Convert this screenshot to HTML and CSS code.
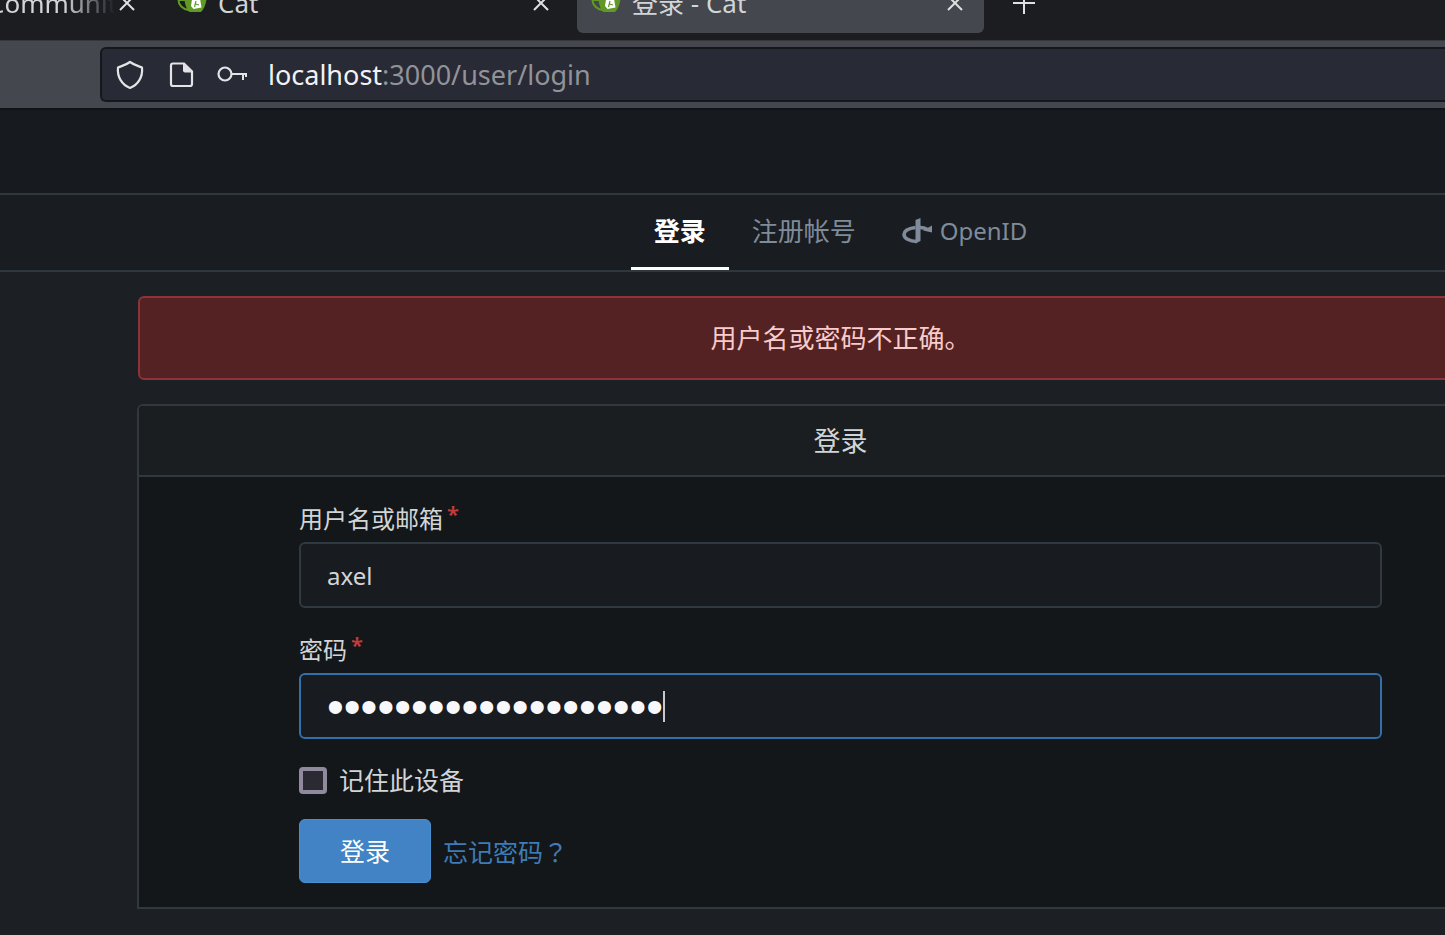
FILE: index.html
```html
<!DOCTYPE html>
<html lang="zh-CN">
<head>
<meta charset="utf-8">
<title>登录 - Cat</title>
<link rel="stylesheet" href="styles.css">
</head>
<body>
<svg class="defs" aria-hidden="true">
  <symbol id="close" viewBox="0 0 16 16"><path d="M1 1l14 14M15 1L1 15" fill="none" stroke="currentColor" stroke-width="2"/></symbol>
  <symbol id="gitea" viewBox="0 0 32 32">
    <path d="M9 13H1.500c0 5 4 9 10 10" fill="none" stroke="#609926" stroke-width="2"/>
    <path d="M7 6h23c0 8-2 14-5 18-1 1-1.500 1-2.500 1h-9c-1.500 0-2-.5-3-2-2-4-3.500-9-3.500-17z" fill="#609926"/>
    <path d="M15 12.500l8-1 1.500 9-8 1.500-2.500-3z" fill="#fff"/>
    <path d="M19 14l-1.500 6m1-3l3.500 1" stroke="#609926" stroke-width="1.200" fill="none"/>
  </symbol>
</svg>
<header class="browser">
  <div class="tabstrip">
    <div class="tab tab-cut"><span class="tab-title tab-fade">Communit</span><button class="tab-close" aria-label="关闭"><svg><use href="#close"/></svg></button></div>
    <div class="tab"><svg class="favicon"><use href="#gitea"/></svg><span class="tab-title">Cat</span><button class="tab-close" aria-label="关闭"><svg><use href="#close"/></svg></button></div>
    <div class="tab tab-active"><svg class="favicon"><use href="#gitea"/></svg><span class="tab-title">登录 - Cat</span><button class="tab-close" aria-label="关闭"><svg><use href="#close"/></svg></button></div>
    <button class="tab-new" aria-label="新标签页"><svg viewBox="0 0 22 22"><path d="M11 0v22M0 11h22" stroke="currentColor" stroke-width="2"/></svg></button>
  </div>
  <div class="toolbar">
    <div class="urlbar">
      <svg class="url-icon" viewBox="0 0 30 30"><path d="M15 2c4 3 8 4 12 5.500C28 17 23 25 15 28 7 25 2 17 3 7.500 7 6 11 5 15 2z" fill="none" stroke="currentColor" stroke-width="2.200" stroke-linejoin="round"/></svg>
      <svg class="url-icon" viewBox="0 0 30 30"><path d="M7 3.500H18l8 8v12.500a2 2 0 0 1-2 2H7a2 2 0 0 1-2-2V5.500a2 2 0 0 1 2-2z" fill="none" stroke="currentColor" stroke-width="2.200"/><path d="M17 3.500l9 9h-7a2 2 0 0 1-2-2z" fill="currentColor"/></svg>
      <svg class="url-icon" viewBox="0 0 30 30"><path d="M14 14h16M26 14v6M29 14v3" fill="none" stroke="currentColor" stroke-width="2"/><circle cx="8" cy="14" r="6.500" fill="none" stroke="currentColor" stroke-width="2.200"/></svg>
      <span class="url"><span class="url-host">localhost</span>:3000/user/login</span>
    </div>
  </div>
</header>
<div class="page">
  <div class="navbar"></div>
  <nav class="auth-tabs">
    <a class="auth-tab auth-tab-active" href="#">登录</a>
    <a class="auth-tab" href="#">注册帐号</a>
    <a class="auth-tab" href="#"><svg class="openid" viewBox="0 0 30 26"><path d="M13.500 2l5-2v23l-5 2.500z" fill="currentColor"/><path d="M13.500 9.500C6 10.500 2 13 2 16.500S7 23.500 15 23.500M18 9.500c3 0 5 .5 7.500 2" fill="none" stroke="currentColor" stroke-width="3.600"/><path d="M30 7.500V14.500l-9-2z" fill="currentColor"/></svg><span class="openid-name">OpenID</span></a>
  </nav>
  <main class="content">
    <p class="error" role="alert">用户名或密码不正确。</p>
    <section class="card">
      <h1 class="card-title">登录</h1>
      <form class="form">
        <div class="field">
          <label class="label" for="user">用户名或邮箱<span class="star">*</span></label>
          <input class="input" id="user" type="text" value="axel">
        </div>
        <div class="field">
          <label class="label" for="password">密码<span class="star">*</span></label>
          <div class="password-wrap">
            <input class="input input-focus" id="password" type="password" value="aaaaaaaaaaaaaaaaaaaa">
            <span class="caret"></span>
          </div>
        </div>
        <div class="remember">
          <input class="check" id="remember" type="checkbox"><label for="remember">记住此设备</label>
        </div>
        <div class="actions">
          <button class="submit" type="submit">登录</button>
          <a class="forgot" href="#">忘记密码<span class="mark" lang="zh-TW">？</span></a>
        </div>
      </form>
    </section>
  </main>
</div>
</body>
</html>
```
FILE: styles.css
```css
* { box-sizing: border-box; }

body {
  margin: 0;
  min-height: 100vh;
  overflow: hidden;
  background: #1c1f24;
  color: #d2d5d8;
  font: 26px/36px "Noto Sans", "Noto Sans CJK SC", sans-serif;
}

button, input { font: inherit; color: inherit; }
a { color: inherit; text-decoration: none; }
svg { display: block; }
.defs { position: absolute; width: 0; height: 0; }

/* Browser window */
.tabstrip {
  display: flex;
  align-items: flex-start;
  gap: 7px;
  height: 40px;
  overflow: hidden;
  background: #1b1d21;
}

.tab {
  flex: none;
  display: flex;
  align-items: center;
  gap: 9px;
  width: 407px;
  height: 60px;
  margin-top: -27px;
  padding: 0 21px 0 14px;
  border-radius: 6px;
}

.tab-cut { gap: 4px; width: 168px; margin-left: -12px; padding-left: 0; }
.tab-active { background: #44474d; }
.tab-title { flex: 1; overflow: hidden; white-space: nowrap; }
.tab-fade { mask-image: linear-gradient(to right, #000 60%, transparent); }
.favicon { width: 32px; height: 32px; }

.tab-close, .tab-new {
  flex: none;
  padding: 0;
  border: 0;
  background: none;
  color: #e0e0e2;
}

.tab-close svg { width: 16px; height: 16px; }
.tab-new { margin: -8px 0 0 22px; }
.tab-new svg { width: 22px; height: 22px; }

.toolbar {
  padding: 6px 0 6px 100px;
  border-top: 1px solid #35373c;
  border-bottom: 2px solid #101317;
  background: #44474d;
}

.urlbar {
  display: flex;
  align-items: center;
  gap: 21px;
  height: 55px;
  padding-left: 13px;
  border: 2px solid #15171c;
  border-right: 0;
  border-radius: 6px 0 0 6px;
  background: #282a36;
}

.url-icon { width: 30px; height: 30px; color: #e4e4e6; }
.url { color: #929399; font-size: 27px; white-space: nowrap; }
.url-host { color: #f2f2f4; }

/* Site, wider than the visible part of the window */
.page { width: calc(100% + 236px); }
.navbar { height: 85px; border-bottom: 2px solid #2f383d; background: #171a1e; }

.auth-tabs {
  display: flex;
  justify-content: center;
  height: 77px;
  border-bottom: 2px solid #2e363e;
  background: #191c20;
}

.auth-tab {
  display: flex;
  align-items: center;
  gap: 8px;
  padding: 0 23px;
  border-bottom: 3px solid transparent;
  color: #7f8b99;
}

.auth-tab-active { border-color: #fff; color: #fff; font-weight: 700; }
.openid { width: 30px; height: 26px; }
.openid-name { font-size: 24px; }

.content { padding: 24px 137px 0; }

.error {
  margin: 0 1px 24px;
  padding: 22px;
  border: 2px solid #8c3438;
  border-radius: 6px;
  background: #542222;
  color: #f9cbcb;
  text-align: center;
}

.card {
  overflow: hidden;
  border: 2px solid #30393f;
  border-radius: 6px 6px 0 0;
  background: #141719;
}

.card-title {
  margin: 0;
  padding: 17px 16px;
  border-bottom: 2px solid #30393f;
  background: #1b1e20;
  font-size: 27px;
  font-weight: 400;
  line-height: 35px;
  text-align: center;
}

.form { padding: 24px 160px; }
.field { margin-bottom: 24px; }
.label { display: flex; gap: 4px; margin-bottom: 5px; font-size: 24px; }
.star { color: #c53c3c; font-size: 22px; font-weight: 600; line-height: 24px; }

.input {
  display: block;
  width: 100%;
  height: 66px;
  padding: 0 26px;
  border: 2px solid #30393f;
  border-radius: 6px;
  outline: 0;
  background: #181b1f;
  font-size: 24px;
}

.input-focus {
  border-color: #3370a8;
  color: #f8f8fa;
  font-family: "Liberation Sans", sans-serif;
  font-size: 48px;
}

.password-wrap { position: relative; }

.caret {
  position: absolute;
  top: 18px;
  left: 364px;
  width: 2px;
  height: 31px;
  background: #c8c9cc;
}

.remember { display: flex; align-items: center; gap: 12px; margin-bottom: 22px; font-size: 25px; line-height: 34px; }

.check {
  appearance: none;
  width: 28px;
  height: 27px;
  margin: 0;
  border: 4px solid #8f8b9c;
  border-radius: 4px;
  background: #2b2a33;
}

.actions { display: flex; align-items: center; gap: 12px; font-size: 25px; line-height: 34px; }

.submit {
  height: 64px;
  padding: 0 40px;
  border: 1px solid #4a8fd0;
  border-radius: 6px;
  background: #4183c4;
  color: #fff;
}

.forgot { color: #3d7cb8; }
.mark { font-family: "Noto Sans CJK TC", sans-serif; }
```
